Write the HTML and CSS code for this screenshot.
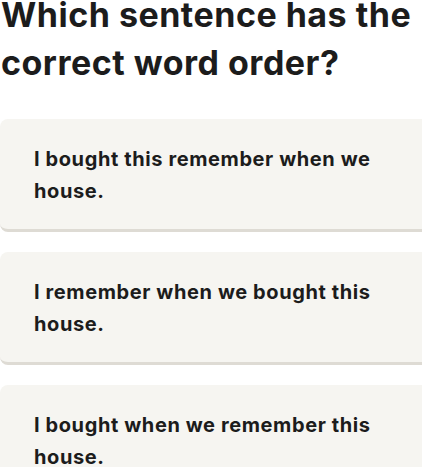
FILE: index.html
```html
<!DOCTYPE html>
<html>
<head>
<meta charset="utf-8">
<link rel="stylesheet" href="styles.css">
</head>
<body>
<div class="page">
  <h1 class="title">Which sentence has the correct word order?</h1>
  <div class="options">
    <div class="option">I bought this remember when we house.</div>
    <div class="option">I remember when we bought this house.</div>
    <div class="option">I bought when we remember this house.</div>
  </div>
</div>
</body>
</html>
```
FILE: styles.css
```css
html, body {
  margin: 0;
  padding: 0;
  background: #ffffff;
  overflow: hidden;
}
.page {
  width: 440px;
  margin-top: -9px;
  font-family: "Inter", "Noto Sans", sans-serif;
  color: #1c1c1c;
}
.title {
  margin: 0;
  padding: 0 0 0 1px;
  font-size: 34px;
  line-height: 48px;
  font-weight: 700;
  letter-spacing: 0.5px;
  width: 420px;
}
.options {
  display: flex;
  flex-direction: column;
  gap: 20px;
  margin-top: 32px;
}
.option {
  background: #f6f5f1;
  border-radius: 8px 0 0 8px;
  border-bottom: 3px solid #dedbd4;
  padding: 24px 56px 22px 34px;
  font-size: 20px;
  line-height: 32px;
  font-weight: 700;
  letter-spacing: 0.6px;
  width: 360px;
}
```
